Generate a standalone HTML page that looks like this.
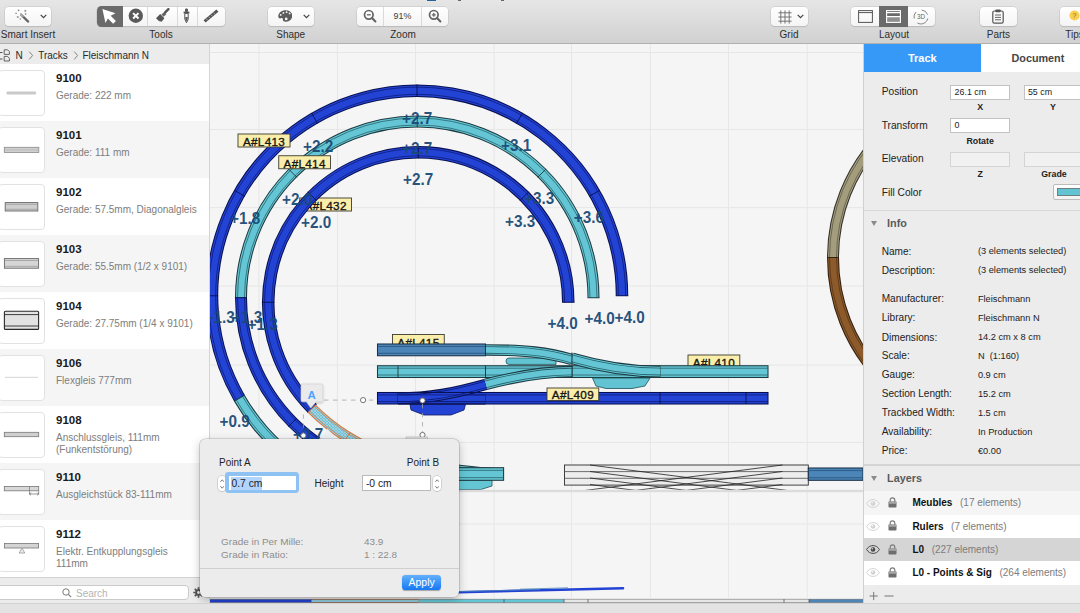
<!DOCTYPE html>
<html><head><meta charset="utf-8"><title>Layout</title>
<style>
*{box-sizing:border-box;margin:0;padding:0}
html,body{width:1080px;height:613px;overflow:hidden;background:#e2e2e2;font-family:"Liberation Sans",sans-serif;}
#app{position:relative;width:1080px;height:613px;overflow:hidden;background:#e2e2e2}
.abs{position:absolute}
#canvas{position:absolute;left:209px;top:44px;width:654px;height:559px;background:#f5f5f5;overflow:hidden}
#canvas svg{position:absolute;left:-209px;top:-44px}
.lb{font-family:"Liberation Sans",sans-serif;font-size:11.7px;fill:#151515;stroke:#151515;stroke-width:0.35;letter-spacing:0.32px}
.el{font-family:"Liberation Sans",sans-serif;font-size:16.4px;font-weight:bold;fill:#194a76;fill-opacity:0.94}
#tb{position:absolute;left:0;top:0;width:1080px;height:44px;background:linear-gradient(#e6e6e6,#d1d1d1);border-bottom:1px solid #b0b0b0}
.btn{position:absolute;top:6.8px;height:19.3px;background:linear-gradient(#ffffff,#f4f4f4);border-radius:4px;box-shadow:0 0 0 0.5px #c4c4c4,0 1px 1px rgba(0,0,0,0.18)}
.btn .dv{position:absolute;top:0;width:1px;height:100%;background:#dadada}
.btn .sel{position:absolute;top:-1px;height:21px;background:#6a6a6a}
.tl{position:absolute;top:27.6px;font-size:10px;color:#2e2e2e;white-space:nowrap;transform:translateX(-50%);line-height:13px}
.btn svg{position:absolute}
#side{position:absolute;left:0;top:44px;width:210.3px;height:559px;background:#fff;border-right:1.2px solid #d4d4d4;overflow:hidden}
#crumb{position:absolute;left:0;top:0;width:210px;height:20.6px;background:#ececec;border-bottom:1.2px solid #dadada;font-size:10px;color:#2a2a2a;line-height:23.5px}
.row{position:absolute;left:0;width:210px;height:57px}
.row{top:0}
.th{position:absolute;left:-2px;top:6px;width:46.5px;height:46px;background:#fff;border:1px solid #e2e2e2;border-radius:4px;overflow:hidden}
.th svg{position:absolute;left:1px;top:-7px}
.t{position:absolute;left:56px;top:6.6px;font-size:11.5px;font-weight:bold;color:#1a1a1a;line-height:14px}
.s1{position:absolute;left:56px;top:25.8px;font-size:10px;color:#7d7d7d;line-height:12px;white-space:nowrap}
.s2{position:absolute;left:56px;top:37.8px;font-size:10px;color:#7d7d7d;line-height:12px;white-space:nowrap}
#right{position:absolute;left:862.5px;top:44px;width:218.5px;height:559px;background:#ececec;border-left:1.5px solid #d0d0d0;overflow:hidden;font-size:10.25px;color:#222}
#right .l{position:absolute;left:18.2px;font-size:10.2px;color:#222;line-height:13px;white-space:nowrap}
#right .in{position:absolute;height:15px;background:#fff;border:1px solid #c2c2c2;font-size:8.9px;line-height:13px;padding-left:3.4px;color:#222;white-space:nowrap}
#right .in.dis{background:#f1f1f1;border-color:#d4d4d4}
#right .cap{position:absolute;font-size:8.8px;font-weight:bold;color:#222;transform:translateX(-50%);line-height:10px;white-space:nowrap}
.il{position:absolute;left:18.2px;font-size:10.1px;line-height:13px;color:#222;white-space:nowrap}
.iv{position:absolute;left:114.4px;font-size:9.25px;line-height:13px;color:#222;white-space:nowrap}
.hd{position:absolute;left:23.6px;font-size:10.8px;font-weight:bold;color:#5a5a5a;line-height:14px}
.tri{position:absolute;left:7px;width:0;height:0;border-left:3.6px solid transparent;border-right:3.6px solid transparent;border-top:5.6px solid #8a8a8a}
.ly{position:absolute;left:0;width:217px;height:23.4px;font-size:10px;line-height:23.4px;white-space:nowrap}
.ly .eye{position:absolute;left:2.4px;top:7.2px;width:14px;height:9px}
.ly .lock{position:absolute;left:24px;top:5.8px;width:9px;height:11px}
.ln{margin-left:48.9px;font-weight:bold;color:#111}
.lc{color:#7c7c7c;margin-left:7.6px}
#pop{position:absolute;left:199.5px;top:438.8px;width:259px;height:158.4px;background:#ececec;border-radius:5.5px;box-shadow:0 0 0 0.6px rgba(0,0,0,0.22),0 3px 10px rgba(0,0,0,0.25);font-size:10px;color:#222}
#pop .p{position:absolute;line-height:13px;white-space:nowrap}
#pop .g{color:#8c8c8c;font-size:9.95px}
.stp{position:absolute;width:7.6px;height:15px;background:#fff;border-radius:3.8px;box-shadow:0 0 0 0.5px #bdbdbd,0 0.5px 1px rgba(0,0,0,0.2)}
</style></head><body><div id="app">

<div id="canvas"><svg width="1080" height="613" viewBox="0 0 1080 613">
<defs><pattern id="hatch" width="3" height="3" patternUnits="userSpaceOnUse"><rect width="3" height="3" fill="#74c4d6"/><path d="M0 0L3 3M3 0L0 3" stroke="#a9d8ea" stroke-width="0.7"/></pattern><filter id="sh" x="-30%" y="-30%" width="160%" height="160%"><feDropShadow dx="0" dy="1" stdDeviation="1.2" flood-color="#000" flood-opacity="0.25"/></filter></defs>
<path d="M258.9 44V490" stroke="#e6e6e6" stroke-width="1"/>
<path d="M337.4 44V490" stroke="#e6e6e6" stroke-width="1"/>
<path d="M415.6 44V490" stroke="#e6e6e6" stroke-width="1"/>
<path d="M494.1 44V490" stroke="#e6e6e6" stroke-width="1"/>
<path d="M571.5 44V490" stroke="#e6e6e6" stroke-width="1"/>
<path d="M650.3 44V490" stroke="#e6e6e6" stroke-width="1"/>
<path d="M728.4 44V490" stroke="#e6e6e6" stroke-width="1"/>
<path d="M807.2 44V490" stroke="#e6e6e6" stroke-width="1"/>
<path d="M209 52.5H863" stroke="#e6e6e6" stroke-width="1"/>
<path d="M209 129.4H863" stroke="#e6e6e6" stroke-width="1"/>
<path d="M209 207.7H863" stroke="#e6e6e6" stroke-width="1"/>
<path d="M209 286.0H863" stroke="#e6e6e6" stroke-width="1"/>
<path d="M209 365.0H863" stroke="#e6e6e6" stroke-width="1"/>
<path d="M209 442.4H863" stroke="#e6e6e6" stroke-width="1"/>
<path d="M258.9 492V598" stroke="#e7e7e7" stroke-width="1"/>
<path d="M337.4 492V598" stroke="#e7e7e7" stroke-width="1"/>
<path d="M415.6 492V598" stroke="#e7e7e7" stroke-width="1"/>
<path d="M494.1 492V598" stroke="#e7e7e7" stroke-width="1"/>
<path d="M571.5 492V598" stroke="#e7e7e7" stroke-width="1"/>
<path d="M650.3 492V598" stroke="#e7e7e7" stroke-width="1"/>
<path d="M728.4 492V598" stroke="#e7e7e7" stroke-width="1"/>
<path d="M807.2 492V598" stroke="#e7e7e7" stroke-width="1"/>
<path d="M209 524H863" stroke="#e7e7e7" stroke-width="1"/>
<rect x="392.5" y="334.5" width="51.75" height="13.5" fill="#fbeeaa" stroke="#3c3a30" stroke-width="0.9"/><text x="418.375" y="346.9" text-anchor="middle" class="lb">A#L415</text>
<rect x="688" y="355" width="51.799999999999955" height="13" fill="#fbeeaa" stroke="#3c3a30" stroke-width="0.9"/><text x="713.9" y="366.9" text-anchor="middle" class="lb">A#L410</text>
<path d="M1007.00 83.50A174.00 174.00 0 0 0 833.00 257.50" fill="none" stroke="#34322a" stroke-width="12"/>
<path d="M1007.00 83.50A174.00 174.00 0 0 0 833.00 257.50" fill="none" stroke="#a39d7e" stroke-width="9.9"/>
<path d="M1007.00 86.98A170.52 170.52 0 0 0 836.48 257.50" fill="none" stroke="#5e5a46" stroke-width="0.8"/>
<path d="M1007.00 80.02A177.48 177.48 0 0 0 829.52 257.50" fill="none" stroke="#5e5a46" stroke-width="0.8"/>
<path d="M1007.00 89.50L1007.00 77.50" stroke="#34322a" stroke-width="0.9"/>
<path d="M839.00 257.50L827.00 257.50" stroke="#34322a" stroke-width="0.9"/>
<path d="M833.00 257.50A174.00 174.00 0 0 0 1007.00 431.50" fill="none" stroke="#33200e" stroke-width="12"/>
<path d="M833.00 257.50A174.00 174.00 0 0 0 1007.00 431.50" fill="none" stroke="#8c5a2b" stroke-width="9.9"/>
<path d="M836.48 257.50A170.52 170.52 0 0 0 1007.00 428.02" fill="none" stroke="#573616" stroke-width="0.8"/>
<path d="M829.52 257.50A177.48 177.48 0 0 0 1007.00 434.98" fill="none" stroke="#573616" stroke-width="0.8"/>
<path d="M839.00 257.50L827.00 257.50" stroke="#33200e" stroke-width="0.9"/>
<path d="M1007.00 425.50L1007.00 437.50" stroke="#33200e" stroke-width="0.9"/>
<path d="M622.00 295.75A205.00 205.00 0 1 0 239.46 398.25" fill="none" stroke="#081050" stroke-width="12.5"/>
<path d="M622.00 295.75A205.00 205.00 0 1 0 239.46 398.25" fill="none" stroke="#2343d4" stroke-width="10.4"/>
<path d="M618.38 295.75A201.38 201.38 0 1 0 242.60 396.44" fill="none" stroke="#0c1a78" stroke-width="0.8"/>
<path d="M625.62 295.75A208.62 208.62 0 1 0 236.33 400.06" fill="none" stroke="#0c1a78" stroke-width="0.8"/>
<path d="M589.12 196.38L599.95 190.12" stroke="#081050" stroke-width="0.9"/>
<path d="M516.38 123.63L522.62 112.80" stroke="#081050" stroke-width="0.9"/>
<path d="M417.00 97.00L417.00 84.50" stroke="#081050" stroke-width="0.9"/>
<path d="M317.63 123.63L311.38 112.80" stroke="#081050" stroke-width="0.9"/>
<path d="M244.88 196.38L234.05 190.12" stroke="#081050" stroke-width="0.9"/>
<path d="M218.25 295.75L205.75 295.75" stroke="#081050" stroke-width="0.9"/>
<path d="M615.75 295.75L628.25 295.75" stroke="#081050" stroke-width="0.9"/>
<path d="M244.88 395.12L234.05 401.38" stroke="#081050" stroke-width="0.9"/>
<path d="M239.46 398.25A205.00 205.00 0 0 0 417.00 500.75" fill="none" stroke="#1d3a40" stroke-width="12.5"/>
<path d="M239.46 398.25A205.00 205.00 0 0 0 417.00 500.75" fill="none" stroke="#64c6d4" stroke-width="10.4"/>
<path d="M242.60 396.44A201.38 201.38 0 0 0 417.00 497.12" fill="none" stroke="#28626c" stroke-width="0.8"/>
<path d="M236.33 400.06A208.62 208.62 0 0 0 417.00 504.38" fill="none" stroke="#28626c" stroke-width="0.8"/>
<path d="M317.62 467.87L311.37 478.70" stroke="#1d3a40" stroke-width="0.9"/>
<path d="M244.88 395.12L234.05 401.38" stroke="#1d3a40" stroke-width="0.9"/>
<path d="M417.00 494.50L417.00 507.00" stroke="#1d3a40" stroke-width="0.9"/>
<path d="M593.50 297.75A176.25 176.25 0 0 0 241.00 297.75" fill="none" stroke="#1d3a40" stroke-width="12"/>
<path d="M593.50 297.75A176.25 176.25 0 0 0 241.00 297.75" fill="none" stroke="#64c6d4" stroke-width="9.9"/>
<path d="M590.02 297.75A172.77 172.77 0 0 0 244.48 297.75" fill="none" stroke="#28626c" stroke-width="0.8"/>
<path d="M596.98 297.75A179.73 179.73 0 0 0 237.52 297.75" fill="none" stroke="#28626c" stroke-width="0.8"/>
<path d="M537.63 177.37L546.12 168.88" stroke="#1d3a40" stroke-width="0.9"/>
<path d="M417.25 127.50L417.25 115.50" stroke="#1d3a40" stroke-width="0.9"/>
<path d="M296.87 177.37L288.38 168.88" stroke="#1d3a40" stroke-width="0.9"/>
<path d="M587.50 297.75L599.50 297.75" stroke="#1d3a40" stroke-width="0.9"/>
<path d="M247.00 297.75L235.00 297.75" stroke="#1d3a40" stroke-width="0.9"/>
<path d="M241.00 297.75A176.25 176.25 0 0 0 417.25 474.00" fill="none" stroke="#081050" stroke-width="12"/>
<path d="M241.00 297.75A176.25 176.25 0 0 0 417.25 474.00" fill="none" stroke="#2343d4" stroke-width="9.9"/>
<path d="M244.48 297.75A172.77 172.77 0 0 0 417.25 470.52" fill="none" stroke="#0c1a78" stroke-width="0.8"/>
<path d="M237.52 297.75A179.73 179.73 0 0 0 417.25 477.48" fill="none" stroke="#0c1a78" stroke-width="0.8"/>
<path d="M296.87 418.13L288.38 426.62" stroke="#081050" stroke-width="0.9"/>
<path d="M247.00 297.75L235.00 297.75" stroke="#081050" stroke-width="0.9"/>
<path d="M417.25 468.00L417.25 480.00" stroke="#081050" stroke-width="0.9"/>
<rect x="299.75" y="198" width="51.75" height="13" fill="#fbeeaa" stroke="#3c3a30" stroke-width="0.9"/><text x="325.625" y="209.9" text-anchor="middle" class="lb">A#L432</text>
<path d="M568.25 302.25A150.00 150.00 0 1 0 312.18 408.32" fill="none" stroke="#081050" stroke-width="12.5"/>
<path d="M568.25 302.25A150.00 150.00 0 1 0 312.18 408.32" fill="none" stroke="#2343d4" stroke-width="10.4"/>
<path d="M564.62 302.25A146.38 146.38 0 1 0 314.75 405.75" fill="none" stroke="#0c1a78" stroke-width="0.8"/>
<path d="M571.88 302.25A153.62 153.62 0 1 0 309.62 410.88" fill="none" stroke="#0c1a78" stroke-width="0.8"/>
<path d="M519.90 200.60L528.74 191.76" stroke="#081050" stroke-width="0.9"/>
<path d="M418.25 158.50L418.25 146.00" stroke="#081050" stroke-width="0.9"/>
<path d="M316.60 200.60L307.76 191.76" stroke="#081050" stroke-width="0.9"/>
<path d="M274.50 302.25L262.00 302.25" stroke="#081050" stroke-width="0.9"/>
<path d="M562.00 302.25L574.50 302.25" stroke="#081050" stroke-width="0.9"/>
<path d="M316.60 403.90L307.76 412.74" stroke="#081050" stroke-width="0.9"/>
<path d="M311.78 408.72A200.00 200.00 0 0 0 347.22 436.91" fill="none" stroke="#d9793f" stroke-width="11.4"/>
<path d="M311.78 408.72A200.00 200.00 0 0 0 347.22 436.91" fill="none" stroke="url(#hatch)" stroke-width="9.3"/>
<path d="M314.12 406.38A196.69 196.69 0 0 0 348.97 434.11" fill="none" stroke="#d9793f" stroke-width="0.8"/>
<path d="M309.44 411.06A203.31 203.31 0 0 0 345.46 439.71" fill="none" stroke="#d9793f" stroke-width="0.8"/>
<path d="M315.81 404.69L307.75 412.75" stroke="#d9793f" stroke-width="0.9"/>
<path d="M350.24 432.08L344.20 441.74" stroke="#d9793f" stroke-width="0.9"/>
<path d="M347.22 436.91A200.00 200.00 0 0 0 391.40 457.51" fill="none" stroke="#d9793f" stroke-width="11.4"/>
<path d="M347.22 436.91A200.00 200.00 0 0 0 391.40 457.51" fill="none" stroke="url(#hatch)" stroke-width="9.3"/>
<path d="M348.97 434.11A196.69 196.69 0 0 0 392.42 454.37" fill="none" stroke="#d9793f" stroke-width="0.8"/>
<path d="M345.46 439.71A203.31 203.31 0 0 0 390.37 460.66" fill="none" stroke="#d9793f" stroke-width="0.8"/>
<path d="M350.24 432.08L344.20 441.74" stroke="#d9793f" stroke-width="0.9"/>
<path d="M393.16 452.09L389.64 462.93" stroke="#d9793f" stroke-width="0.9"/>
<path d="M440 480.3H492V486L480.5 489.6H440Z" fill="#64c6d4" stroke="#1c4c55" stroke-width="0.8"/>
<path d="M430 467 C 455 469.5 478 474 503.6 474" fill="none" stroke="#1d3a40" stroke-width="11.6"/>
<path d="M430 467 C 455 469.5 478 474 503.6 474" fill="none" stroke="#64c6d4" stroke-width="9.5"/>
<path d="M430 467 C 455 469.5 478 474 503.6 474" fill="none" stroke="#28626c" stroke-width="7.528"/>
<path d="M430 467 C 455 469.5 478 474 503.6 474" fill="none" stroke="#64c6d4" stroke-width="5.928"/>
<rect x="417" y="467.7" width="86.60000000000002" height="12.600000000000023" fill="#64c6d4" stroke="#1d3a40" stroke-width="1.05"/>
<path d="M417 470.35H503.6" stroke="#28626c" stroke-width="0.8"/>
<path d="M417 477.65H503.6" stroke="#28626c" stroke-width="0.8"/>
<rect x="564.5" y="465" width="243.8" height="20.1" fill="#ededed" stroke="#2e2e2e" stroke-width="0.9"/>
<path d="M564.5 471.6H808M564.5 478.3H808" stroke="#3a3a3a" stroke-width="0.7"/>
<path d="M590 465.0L786.9 490.4M782.4 465.0L585.5 490.4" stroke="#1e1e1e" stroke-width="0.8" fill="none"/>
<path d="M590 471.5L736.5 490.4M782.4 471.5L635.9 490.4" stroke="#1e1e1e" stroke-width="0.8" fill="none"/>
<path d="M590 478.0L686.1 490.4M782.4 478.0L686.3 490.4" stroke="#1e1e1e" stroke-width="0.8" fill="none"/>
<path d="M590 484.5L635.7 490.4M782.4 484.5L736.7 490.4" stroke="#1e1e1e" stroke-width="0.8" fill="none"/>
<rect x="808.3" y="468" width="54.700000000000045" height="12.300000000000011" fill="#4c86b9" stroke="#1a3048" stroke-width="1.05"/>
<path d="M808.3 470.58H863" stroke="#27507a" stroke-width="0.8"/>
<path d="M808.3 477.72H863" stroke="#27507a" stroke-width="0.8"/>
<rect x="377.5" y="344" width="108.0" height="11.75" fill="#4c86b9" stroke="#1a3048" stroke-width="1.05"/>
<path d="M377.5 346.47H485.5" stroke="#27507a" stroke-width="0.8"/>
<path d="M377.5 353.28H485.5" stroke="#27507a" stroke-width="0.8"/>
<rect x="377.5" y="365.75" width="390.5" height="11.75" fill="#64c6d4" stroke="#1d3a40" stroke-width="1.05"/>
<path d="M377.5 368.22H768" stroke="#28626c" stroke-width="0.8"/>
<path d="M377.5 375.03H768" stroke="#28626c" stroke-width="0.8"/>
<path d="M398 365.75V377.5" stroke="#1d3a40" stroke-width="0.9"/>
<path d="M485.5 365.75V377.5" stroke="#1d3a40" stroke-width="0.9"/>
<path d="M572 365.75V377.5" stroke="#1d3a40" stroke-width="0.9"/>
<path d="M660 365.75V377.5" stroke="#1d3a40" stroke-width="0.9"/>
<rect x="377.5" y="392.5" width="390.5" height="11.5" fill="#2343d4" stroke="#081050" stroke-width="1.05"/>
<path d="M377.5 394.92H768" stroke="#0c1a78" stroke-width="0.8"/>
<path d="M377.5 401.58H768" stroke="#0c1a78" stroke-width="0.8"/>
<path d="M398 392.5V404" stroke="#081050" stroke-width="0.9"/>
<path d="M485.5 392.5V404" stroke="#081050" stroke-width="0.9"/>
<path d="M660 392.5V404" stroke="#081050" stroke-width="0.9"/>
<path d="M746 392.5V404" stroke="#081050" stroke-width="0.9"/>
<path d="M509 358H556V364.4H509Q506 364.4 506 361.2Q506 358 509 358Z" fill="#62c4d2" stroke="#1e535c" stroke-width="0.8"/>
<path d="M592.5 378H650L645 386L632 388.5H606L596 386Z" fill="#62c4d2" stroke="#1e535c" stroke-width="0.8"/>
<path d="M410 404.5H465.5L464 410L451 415H424L411 410Z" fill="#2343d4" stroke="#0c1866" stroke-width="0.8"/>
<path d="M485.5 349.9 C 525 349.9 548 352.5 572 359.6" fill="none" stroke="#1d3a40" stroke-width="11.5"/>
<path d="M485.5 349.9 C 525 349.9 548 352.5 572 359.6" fill="none" stroke="#64c6d4" stroke-width="9.4"/>
<path d="M485.5 349.9 C 525 349.9 548 352.5 572 359.6" fill="none" stroke="#28626c" stroke-width="7.47"/>
<path d="M485.5 349.9 C 525 349.9 548 352.5 572 359.6" fill="none" stroke="#64c6d4" stroke-width="5.87"/>
<path d="M572 358.4 C 600 366.6 628 371.6 660 371.6" fill="none" stroke="#1d3a40" stroke-width="11.8"/>
<path d="M572 358.4 C 600 366.6 628 371.6 660 371.6" fill="none" stroke="#64c6d4" stroke-width="9.700000000000001"/>
<path d="M572 358.4 C 600 366.6 628 371.6 660 371.6" fill="none" stroke="#28626c" stroke-width="7.644"/>
<path d="M572 358.4 C 600 366.6 628 371.6 660 371.6" fill="none" stroke="#64c6d4" stroke-width="6.0440000000000005"/>
<path d="M485.5 384.4 C 515 376.6 545 371.6 572 371.6" fill="none" stroke="#1d3a40" stroke-width="11.5"/>
<path d="M485.5 384.4 C 515 376.6 545 371.6 572 371.6" fill="none" stroke="#64c6d4" stroke-width="9.4"/>
<path d="M485.5 384.4 C 515 376.6 545 371.6 572 371.6" fill="none" stroke="#28626c" stroke-width="7.47"/>
<path d="M485.5 384.4 C 515 376.6 545 371.6 572 371.6" fill="none" stroke="#64c6d4" stroke-width="5.87"/>
<path d="M398 398.2 C 430 398.2 455 393 485.5 384.5" fill="none" stroke="#081050" stroke-width="11.5"/>
<path d="M398 398.2 C 430 398.2 455 393 485.5 384.5" fill="none" stroke="#2343d4" stroke-width="9.4"/>
<path d="M398 398.2 C 430 398.2 455 393 485.5 384.5" fill="none" stroke="#0c1a78" stroke-width="7.47"/>
<path d="M398 398.2 C 430 398.2 455 393 485.5 384.5" fill="none" stroke="#2343d4" stroke-width="5.87"/>
<path d="M572 352.5V377.5M485.5 344V355.8M485.5 365.8V377.5M485.5 392.5V404" stroke="#1d3a40" stroke-width="1"/>
<path d="M398 392.5H485.5M398 404H485.5" stroke="#081050" stroke-width="1.05"/><path d="M398 394.9H485.5M398 401.6H485.5" stroke="#0c1a78" stroke-width="0.8"/>
<rect x="547" y="388" width="51.75" height="12.5" fill="#fbeeaa" stroke="#3c3a30" stroke-width="0.9"/><text x="572.875" y="399.4" text-anchor="middle" class="lb">A#L409</text>
<rect x="238" y="134" width="52" height="13" fill="#fbeeaa" stroke="#3c3a30" stroke-width="0.9"/><text x="264.0" y="145.9" text-anchor="middle" class="lb">A#L413</text>
<rect x="278.75" y="155.75" width="51.75" height="13.0" fill="#fbeeaa" stroke="#3c3a30" stroke-width="0.9"/><text x="304.625" y="167.65" text-anchor="middle" class="lb">A#L414</text>
<text transform="translate(402 123.5) scale(0.935 1)" class="el">+2.7</text>
<text transform="translate(402 154.25) scale(0.935 1)" class="el">+2.7</text>
<text transform="translate(403 184.75) scale(0.935 1)" class="el">+2.7</text>
<text transform="translate(501 150.5) scale(0.935 1)" class="el">+3.1</text>
<text transform="translate(524 204.25) scale(0.935 1)" class="el">+3.3</text>
<text transform="translate(505 226.5) scale(0.935 1)" class="el">+3.3</text>
<text transform="translate(573.75 223.0) scale(0.935 1)" class="el">+3.6</text>
<text transform="translate(547.5 329.25) scale(0.935 1)" class="el">+4.0</text>
<text transform="translate(584.5 324.25) scale(0.935 1)" class="el">+4.0</text>
<text transform="translate(614.5 322.5) scale(0.935 1)" class="el">+4.0</text>
<text transform="translate(303 151.5) scale(0.935 1)" class="el">+2.2</text>
<text transform="translate(282 205.0) scale(0.935 1)" class="el">+2.0</text>
<text transform="translate(301 227.5) scale(0.935 1)" class="el">+2.0</text>
<text transform="translate(230 223.5) scale(0.935 1)" class="el">+1.8</text>
<text transform="translate(204.5 322.5) scale(0.935 1)" class="el">+1.3</text>
<text transform="translate(232 322.5) scale(0.935 1)" class="el">+1.3</text>
<text transform="translate(247.5 329.5) scale(0.935 1)" class="el">+1.3</text>
<text transform="translate(219.5 426.5) scale(0.935 1)" class="el">+0.9</text>
<text transform="translate(293 439.5) scale(0.935 1)" class="el">+0.7</text>
<path d="M324 400.1H378M422.5 404V435M303.4 414.4V435" stroke="#a4a4a4" stroke-width="0.8" stroke-dasharray="4.4 4.6" fill="none"/>
<circle cx="363.1" cy="400.1" r="2.6" fill="#fff" stroke="#666" stroke-width="0.9"/>
<circle cx="422.5" cy="400.5" r="2.6" fill="#fff" stroke="#666" stroke-width="0.9"/>
<circle cx="422.5" cy="435" r="2.6" fill="#fff" stroke="#666" stroke-width="0.9"/>
<circle cx="303.4" cy="435.5" r="2.6" fill="#fff" stroke="#666" stroke-width="0.9"/>
<rect x="406" y="437" width="21.5" height="8" fill="#e4e4e4" stroke="#bbb" stroke-width="0.7"/>
<path d="M302.5 384H321.3Q322.8 384 322.8 385.5V400.3Q322.8 401.8 321.3 401.8H316L310.8 408L306.4 401.8H302.5Q301 401.8 301 400.3V385.5Q301 384 302.5 384Z" fill="#eaeaea" stroke="#cfcfcf" stroke-width="0.6" filter="url(#sh)"/>
<text x="311.6" y="399" text-anchor="middle" font-size="11.4" font-weight="bold" fill="#4da3ff" font-family="Liberation Sans">A</text>
<rect x="209" y="489.8" width="654" height="2.4" fill="#dcdcdc"/>
<path d="M330 595.5L459 592.2L540 590.3L623 588.2" stroke="#2343d4" stroke-width="2.6" fill="none" stroke-linecap="round"/>
<path d="M459 591.6L540 589.5M520 589.2L568 587.8" stroke="#4a85b8" stroke-width="0.8" fill="none"/>
<rect x="209" y="599.3" width="103" height="3.2" fill="#2343d4"/>
<rect x="311.5" y="599.3" width="107" height="3.2" fill="#8ecbe0" stroke="#d9793f" stroke-width="0.7"/>
<rect x="418.5" y="599.3" width="146" height="3.2" fill="#64c6d4"/>
<rect x="564" y="599.3" width="245" height="3.2" fill="#e6e6e6"/>
<rect x="809" y="599.3" width="54" height="3.2" fill="#4c86b9"/>
<path d="M209 599.3H863M209 602.5H863" stroke="#4a4a4a" stroke-width="0.6" stroke-opacity="0.75"/>
<path d="M504 599.3V602.5M564 599.3V602.5M588 599.3V602.5M784 599.3V602.5M809 599.3V602.5" stroke="#444" stroke-width="0.7"/>
</svg></div>

<div id="side">
<div id="crumb">
<svg class="abs" style="left:0;top:5px" width="11" height="13" viewBox="0 0 11 13"><path d="M0 3.5H2.5M0 10H2.5" stroke="#555" stroke-width="1"/><path d="M4.2 0.8H7.6L9.4 2.6V5.4H4.2Z M4.2 7.4H7.6L9.4 9.2V12H4.2Z" fill="none" stroke="#555" stroke-width="0.9"/></svg>
<span class="abs" style="left:15.5px">N</span>
<svg class="abs" style="left:28px;top:7.2px" width="6" height="9" viewBox="0 0 6 9"><path d="M1.2 0.6L4.6 4.5L1.2 8.4" fill="none" stroke="#777" stroke-width="0.9"/></svg>
<span class="abs" style="left:38.2px">Tracks</span>
<svg class="abs" style="left:72.5px;top:7.2px" width="6" height="9" viewBox="0 0 6 9"><path d="M1.2 0.6L4.6 4.5L1.2 8.4" fill="none" stroke="#777" stroke-width="0.9"/></svg>
<span class="abs" style="left:82.4px">Fleischmann N</span>
</div>
<div class="abs" style="left:0;top:-44px;width:209px;height:559px">
<div class="row" style="top:64px;background:#ffffff"><div class="th"><svg width="46" height="57" viewBox="0 0 46 57"><rect x="6.5" y="27.5" width="29.5" height="3" rx="1" fill="#c9c9c9"/></svg></div><div class="t">9100</div><div class="s1">Gerade: 222 mm</div></div>
<div class="row" style="top:121px;background:#f5f5f5"><div class="th"><svg width="46" height="57" viewBox="0 0 46 57"><rect x="4.3" y="26.3" width="34.5" height="5.2" fill="#d0d0d0" stroke="#8a8a8a" stroke-width="0.8"/><path d="M4.3 28.9H38.8" stroke="#aaa" stroke-width="0.6"/></svg></div><div class="t">9101</div><div class="s1">Gerade: 111 mm</div></div>
<div class="row" style="top:178px;background:#ffffff"><div class="th"><svg width="46" height="57" viewBox="0 0 46 57"><rect x="5.2" y="24.6" width="32.6" height="8.4" fill="#cfcfcf" stroke="#666" stroke-width="0.9"/><path d="M5.2 26.3H37.8M5.2 31.3H37.8" stroke="#8a8a8a" stroke-width="0.6"/></svg></div><div class="t">9102</div><div class="s1">Gerade: 57.5mm, Diagonalgleis</div></div>
<div class="row" style="top:235px;background:#f5f5f5"><div class="th"><svg width="46" height="57" viewBox="0 0 46 57"><rect x="4.4" y="23.6" width="34.2" height="9.6" fill="#d6d6d6" stroke="#666" stroke-width="0.9"/><path d="M4.4 25.5H38.6M4.4 31.3H38.6" stroke="#8a8a8a" stroke-width="0.6"/></svg></div><div class="t">9103</div><div class="s1">Gerade: 55.5mm (1/2 x 9101)</div></div>
<div class="row" style="top:292px;background:#ffffff"><div class="th"><svg width="46" height="57" viewBox="0 0 46 57"><rect x="4.4" y="19.2" width="34.2" height="18.2" rx="1" fill="#e2e2e2" stroke="#2a2a2a" stroke-width="1.1"/><path d="M4.4 22.6H38.6M4.4 34H38.6" stroke="#2a2a2a" stroke-width="0.9"/></svg></div><div class="t">9104</div><div class="s1">Gerade: 27.75mm (1/4 x 9101)</div></div>
<div class="row" style="top:349px;background:#f5f5f5"><div class="th"><svg width="46" height="57" viewBox="0 0 46 57"><path d="M5 28.3H38" stroke="#d4d4d4" stroke-width="1"/></svg></div><div class="t">9106</div><div class="s1">Flexgleis 777mm</div></div>
<div class="row" style="top:406px;background:#ffffff"><div class="th"><svg width="46" height="57" viewBox="0 0 46 57"><rect x="4.3" y="26.3" width="34.4" height="4.4" fill="#cfcfcf" stroke="#777" stroke-width="0.8"/></svg></div><div class="t">9108</div><div class="s1">Anschlussgleis, 111mm</div><div class="s2">(Funkentstörung)</div></div>
<div class="row" style="top:463px;background:#f5f5f5"><div class="th"><svg width="46" height="57" viewBox="0 0 46 57"><rect x="4.3" y="23.4" width="34.4" height="4.4" fill="#d8d8d8" stroke="#777" stroke-width="0.8"/><path d="M29.5 23.4V31.5M38.7 27.8V31.5" stroke="#777" stroke-width="0.7"/><path d="M29.5 31H38.7M31 29.6L29.6 31L31 32.4M37.2 29.6L38.6 31L37.2 32.4" stroke="#555" stroke-width="0.6" fill="none"/></svg></div><div class="t">9110</div><div class="s1">Ausgleichstück 83-111mm</div></div>
<div class="row" style="top:520px;background:#ffffff"><div class="th"><svg width="46" height="57" viewBox="0 0 46 57"><rect x="4.4" y="23.4" width="34.2" height="4.6" fill="#d4d4d4" stroke="#777" stroke-width="0.8"/><path d="M22 28.2L19.2 33H24.8Z" fill="#eee" stroke="#888" stroke-width="0.7"/></svg></div><div class="t">9112</div><div class="s1">Elektr. Entkupplungsgleis</div><div class="s2">111mm</div></div>
</div>
<div class="abs" style="left:0;top:533px;width:209px;height:26px;background:#ececec;border-top:1.6px solid #d2d2d2"></div>
<div class="abs" style="left:-6px;top:541px;width:195px;height:15px;background:#fff;border:1px solid #cacaca;border-radius:4px"></div>
<svg class="abs" style="left:62px;top:543.5px" width="10" height="10" viewBox="0 0 10 10"><circle cx="4" cy="4" r="3.2" fill="none" stroke="#7a7a7a" stroke-width="1"/><path d="M6.4 6.4L9.2 9.2" stroke="#7a7a7a" stroke-width="1.1"/></svg>
<span class="abs" style="left:76px;top:542.5px;font-size:10px;line-height:13px;color:#b4b4b4">Search</span>
<svg class="abs" style="left:192.5px;top:543px" width="11" height="11" viewBox="0 0 11 11"><g stroke="#555" stroke-width="1.7"><path d="M5.5 0.3V10.7M0.3 5.5H10.7M1.8 1.8L9.2 9.2M9.2 1.8L1.8 9.2"/></g><circle cx="5.5" cy="5.5" r="3.3" fill="#555"/><circle cx="5.5" cy="5.5" r="1.4" fill="#ececec"/></svg>
</div>

<div id="right">
<div class="abs" style="left:0;top:0;width:117.5px;height:28.2px;background:#3699f7"></div>
<div class="abs" style="left:117.5px;top:0;width:100px;height:28.2px;background:#fff"></div>
<div class="abs" style="left:0;top:7px;width:117.5px;text-align:center;font-size:11px;font-weight:bold;color:#fff;line-height:14px">Track</div>
<div class="abs" style="left:134.4px;top:7px;width:80px;text-align:center;font-size:10.8px;font-weight:bold;color:#454545;line-height:14px">Document</div>
<div class="l" style="top:41px">Position</div>
<div class="in" style="left:86.7px;top:40.8px;width:60.3px">26.1 cm</div>
<div class="in" style="left:160px;top:40.8px;width:60px">55 cm</div>
<div class="cap" style="left:116.6px;top:58px">X</div><div class="cap" style="left:189.5px;top:58px">Y</div>
<div class="l" style="top:74.5px">Transform</div>
<div class="in" style="left:86.7px;top:73.6px;width:60.3px;height:15.6px">0</div>
<div class="cap" style="left:116.6px;top:91.5px">Rotate</div>
<div class="l" style="top:108px">Elevation</div>
<div class="in dis" style="left:86.7px;top:108px;width:60.3px;height:14.6px"></div>
<div class="in dis" style="left:160px;top:108px;width:60px;height:14.6px"></div>
<div class="cap" style="left:116.6px;top:124.5px">Z</div><div class="cap" style="left:190.5px;top:124.5px">Grade</div>
<div class="l" style="top:141.5px">Fill Color</div>
<div class="abs" style="left:189.5px;top:140px;width:32px;height:16.4px;background:linear-gradient(#fff,#f2f2f2);border:1px solid #bcbcbc;border-radius:2px"></div>
<div class="abs" style="left:193.5px;top:144.4px;width:26px;height:8px;background:#62c4d2;border:0.8px solid #6d7f82"></div>
<div class="abs" style="left:0;top:166px;width:217px;height:1.2px;background:#d9d9d9"></div>
<div class="tri" style="top:177px"></div><div class="hd" style="top:172px">Info</div>
<div class="abs" style="left:0;top:-44px;width:217px;height:613px">
<div class="il" style="top:244.7px">Name:</div><div class="iv" style="top:245.0px">(3 elements selected)</div>
<div class="il" style="top:263.8px">Description:</div><div class="iv" style="top:264.1px">(3 elements selected)</div>
<div class="il" style="top:292.3px">Manufacturer:</div><div class="iv" style="top:292.6px">Fleischmann</div>
<div class="il" style="top:311.4px">Library:</div><div class="iv" style="top:311.7px">Fleischmann N</div>
<div class="il" style="top:330.5px">Dimensions:</div><div class="iv" style="top:330.8px">14.2 cm x 8 cm</div>
<div class="il" style="top:349.2px">Scale:</div><div class="iv" style="top:349.5px">N&nbsp; (1:160)</div>
<div class="il" style="top:368.2px">Gauge:</div><div class="iv" style="top:368.5px">0.9 cm</div>
<div class="il" style="top:387.2px">Section Length:</div><div class="iv" style="top:387.5px">15.2 cm</div>
<div class="il" style="top:406.2px">Trackbed Width:</div><div class="iv" style="top:406.5px">1.5 cm</div>
<div class="il" style="top:425.2px">Availability:</div><div class="iv" style="top:425.5px">In Production</div>
<div class="il" style="top:444.4px">Price:</div><div class="iv" style="top:444.7px">€0.00</div>
<div class="ly" style="top:491.4px;background:#f5f5f5"><svg class="eye" viewBox="0 0 14 9"><path d="M0.6 4.5C2.4 1.4 4.8 0.6 7 0.6C9.2 0.6 11.6 1.4 13.4 4.5C11.6 7.6 9.2 8.4 7 8.4C4.8 8.4 2.4 7.6 0.6 4.5Z" fill="none" stroke="#d2d2d2" stroke-width="1"/><circle cx="7" cy="4.5" r="2.3" fill="#d2d2d2"/><circle cx="6.3" cy="3.8" r="0.8" fill="#f5f5f5"/></svg><svg class="lock" viewBox="0 0 9 11"><path d="M2.2 5V3.2Q2.2 0.9 4.5 0.9Q6.8 0.9 6.8 3.2V5" fill="none" stroke="#7c7c7c" stroke-width="1.2"/><rect x="0.5" y="4.6" width="8" height="5.9" rx="0.8" fill="#6e6e6e"/><rect x="0.5" y="4.6" width="8" height="2.1" fill="#a8a8a8"/></svg><span class="ln">Meubles</span><span class="lc">(17 elements)</span></div>
<div class="ly" style="top:514.7px;background:#ffffff"><svg class="eye" viewBox="0 0 14 9"><path d="M0.6 4.5C2.4 1.4 4.8 0.6 7 0.6C9.2 0.6 11.6 1.4 13.4 4.5C11.6 7.6 9.2 8.4 7 8.4C4.8 8.4 2.4 7.6 0.6 4.5Z" fill="none" stroke="#d2d2d2" stroke-width="1"/><circle cx="7" cy="4.5" r="2.3" fill="#d2d2d2"/><circle cx="6.3" cy="3.8" r="0.8" fill="#ffffff"/></svg><svg class="lock" viewBox="0 0 9 11"><path d="M2.2 5V3.2Q2.2 0.9 4.5 0.9Q6.8 0.9 6.8 3.2V5" fill="none" stroke="#7c7c7c" stroke-width="1.2"/><rect x="0.5" y="4.6" width="8" height="5.9" rx="0.8" fill="#6e6e6e"/><rect x="0.5" y="4.6" width="8" height="2.1" fill="#a8a8a8"/></svg><span class="ln">Rulers</span><span class="lc">(7 elements)</span></div>
<div class="ly" style="top:538.0px;background:#d5d5d5"><svg class="eye" viewBox="0 0 14 9"><path d="M0.6 4.5C2.4 1.4 4.8 0.6 7 0.6C9.2 0.6 11.6 1.4 13.4 4.5C11.6 7.6 9.2 8.4 7 8.4C4.8 8.4 2.4 7.6 0.6 4.5Z" fill="none" stroke="#4a4a4a" stroke-width="1"/><circle cx="7" cy="4.5" r="2.3" fill="#4a4a4a"/><circle cx="6.3" cy="3.8" r="0.8" fill="#d5d5d5"/></svg><svg class="lock" viewBox="0 0 9 11"><path d="M2.2 5V3.2Q2.2 0.9 4.5 0.9Q6.8 0.9 6.8 3.2V5" fill="none" stroke="#7c7c7c" stroke-width="1.2"/><rect x="0.5" y="4.6" width="8" height="5.9" rx="0.8" fill="#6e6e6e"/><rect x="0.5" y="4.6" width="8" height="2.1" fill="#a8a8a8"/></svg><span class="ln">L0</span><span class="lc">(227 elements)</span></div>
<div class="ly" style="top:561.3px;background:#ffffff"><svg class="eye" viewBox="0 0 14 9"><path d="M0.6 4.5C2.4 1.4 4.8 0.6 7 0.6C9.2 0.6 11.6 1.4 13.4 4.5C11.6 7.6 9.2 8.4 7 8.4C4.8 8.4 2.4 7.6 0.6 4.5Z" fill="none" stroke="#d2d2d2" stroke-width="1"/><circle cx="7" cy="4.5" r="2.3" fill="#d2d2d2"/><circle cx="6.3" cy="3.8" r="0.8" fill="#ffffff"/></svg><svg class="lock" viewBox="0 0 9 11"><path d="M2.2 5V3.2Q2.2 0.9 4.5 0.9Q6.8 0.9 6.8 3.2V5" fill="none" stroke="#7c7c7c" stroke-width="1.2"/><rect x="0.5" y="4.6" width="8" height="5.9" rx="0.8" fill="#6e6e6e"/><rect x="0.5" y="4.6" width="8" height="2.1" fill="#a8a8a8"/></svg><span class="ln">L0 - Points &amp; Sig</span><span class="lc">(264 elements)</span></div>
</div>
<div class="abs" style="left:0;top:420.4px;width:217px;height:1.2px;background:#d4d4d4"></div>
<div class="tri" style="top:431.5px"></div><div class="hd" style="top:427px">Layers</div>
<svg class="abs" style="left:5px;top:547px" width="30" height="10" viewBox="0 0 30 10"><path d="M0.6 5H8.8M4.7 0.9V9.1M15.4 5H24.6" stroke="#6c6c6c" stroke-width="0.9"/></svg>
</div>

<svg class="abs" style="left:310px;top:424px" width="40" height="16" viewBox="310 424 40 16"><path d="M318.6 439.4L327.8 428.7L337.2 439.4Z" fill="rgba(234,240,245,0.88)"/></svg>
<div id="pop">
<div class="p" style="left:19.5px;top:17.3px">Point A</div>
<div class="p" style="right:19.4px;top:17.3px">Point B</div>
<div class="stp" style="left:18.5px;top:37.2px"><svg style="position:absolute;left:1.6px;top:2.6px" width="4.4" height="10" viewBox="0 0 4.4 10"><path d="M0.4 2.8L2.2 0.8L4 2.8M0.4 7.2L2.2 9.2L4 7.2" fill="none" stroke="#555" stroke-width="0.8"/></svg></div>
<div class="abs" style="left:25.8px;top:33.6px;width:73.6px;height:20.4px;border-radius:3.4px;background:#8ec2f3"></div>
<div class="abs" style="left:29px;top:37px;width:67.1px;height:14px;background:#fff"></div>
<div class="abs" style="left:31.5px;top:38.4px;width:30.7px;height:12.4px;background:#b2d5fd"></div>
<div class="p" style="left:32px;top:38.4px;font-size:10.3px">0.7 cm</div>
<div class="p" style="left:115px;top:38.2px">Height</div>
<div class="abs" style="left:162.8px;top:36.4px;width:68.8px;height:15.8px;background:#fff;border:1px solid #b9b9b9"></div>
<div class="p" style="left:166.4px;top:38.2px;font-size:10.3px">-0 cm</div>
<div class="stp" style="left:233.6px;top:37.2px"><svg style="position:absolute;left:1.6px;top:2.6px" width="4.4" height="10" viewBox="0 0 4.4 10"><path d="M0.4 2.8L2.2 0.8L4 2.8M0.4 7.2L2.2 9.2L4 7.2" fill="none" stroke="#555" stroke-width="0.8"/></svg></div>
<div class="p g" style="left:21.6px;top:96.2px">Grade in Per Mille:</div><div class="p g" style="left:164.4px;top:96.2px">43.9</div>
<div class="p g" style="left:21.6px;top:108.8px">Grade in Ratio:</div><div class="p g" style="left:164.4px;top:108.8px">1 : 22.8</div>
<div class="abs" style="left:0;top:129px;width:259px;height:1px;background:#cfcfcf"></div>
<div class="abs" style="left:202.2px;top:136.5px;width:39.8px;height:15px;border-radius:3.6px;background:linear-gradient(#62b0fc,#1678f3);box-shadow:0 0.5px 1px rgba(0,0,0,0.3);color:#fff;font-size:10.5px;line-height:15px;text-align:center">Apply</div>
</div>

<div id="tb">
<div class="abs" style="left:426.8px;top:0;width:9.5px;height:1.2px;background:#2c5f9a"></div>
<div class="abs" style="left:457.5px;top:0;width:3px;height:0.8px;background:#666"></div><div class="abs" style="left:500.5px;top:0;width:3px;height:0.8px;background:#666"></div>

<div class="btn" style="left:5px;width:46px">
<svg style="left:10px;top:2.5px" width="20" height="16" viewBox="0 0 20 16"><path d="M6 5.6L13.2 12.6" stroke="#666" stroke-width="2.2" stroke-linecap="round"/><path d="M6 5.6L7.6 7.2" stroke="#a8a8a8" stroke-width="2.2" stroke-linecap="round"/><g stroke="#7a7a7a" stroke-width="0.7" fill="none"><path d="M3.6 0.5V2.3M2.7 1.4H4.5M10.3 0.8V3M9.2 1.9H11.4M1.1 3.7V5.1M0.4 4.4H1.8M10.6 4.2V5.8M9.8 5H11.4M2.8 7V9M1.8 8H3.8M5.3 9.4V10.6M4.7 10H5.9"/></g></svg>
<svg style="left:35.4px;top:7.6px" width="7" height="5" viewBox="0 0 7 5"><path d="M0.7 0.8L3.5 3.6L6.3 0.8" fill="none" stroke="#444" stroke-width="1.2"/></svg>
</div>
<div class="tl" style="left:28px">Smart Insert</div>

<div class="btn" style="left:97.3px;width:127.8px">
<div class="sel" style="left:-0.5px;width:26.3px;border-radius:4.5px 0 0 4.5px"></div>
<div class="dv" style="left:50px"></div><div class="dv" style="left:79.4px"></div><div class="dv" style="left:100px"></div>
<svg style="left:4.2px;top:1.2px" width="17.5" height="17.5" viewBox="0 0 15 15"><path d="M1.2 0.8L12.4 4.4L8.3 6.6L12.8 11.1L10.4 13.5L5.9 9L3.8 12.8Z" fill="#fff"/></svg>
<svg style="left:30.4px;top:1.2px" width="15.6" height="15.6" viewBox="0 0 15 15"><circle cx="7.5" cy="7.5" r="6.9" fill="#5a5a5a"/><path d="M4.9 4.9L10.1 10.1M10.1 4.9L4.9 10.1" stroke="#fff" stroke-width="1.9"/></svg>
<svg style="left:57.5px;top:1.6px" width="16" height="15" viewBox="0 0 16 15"><path d="M1 10.2L5.2 6L9.4 10.2L6.6 13.8Q3 13 1 10.2Z" fill="#555"/><path d="M6.4 6.6L8.6 8.8L11.4 6.2L9.2 4Z" fill="#666"/><path d="M10.2 4.4L13.4 1.2" stroke="#555" stroke-width="2.4" stroke-linecap="round"/></svg>
<svg style="left:84.4px;top:1.6px" width="9" height="16" viewBox="0 0 9 16"><rect x="3" y="0.6" width="3" height="3.4" rx="1.2" fill="#555"/><rect x="1.6" y="3.6" width="5.8" height="1.8" fill="#555"/><path d="M2.8 5.4H6.2V11.2L4.5 14.8L2.8 11.2Z" fill="none" stroke="#555" stroke-width="1"/><path d="M3.4 9H5.6V11L4.5 13.4L3.4 11Z" fill="#555"/></svg>
<svg style="left:105.5px;top:2.4px" width="16" height="14" viewBox="0 0 16 14"><path d="M1.6 12.4L14.4 1.6" stroke="#555" stroke-width="3.2"/><path d="M3.2 9.6L4.6 11.2M5.6 7.6L7 9.2M8 5.6L9.4 7.2M10.4 3.6L11.8 5.2" stroke="#ddd" stroke-width="0.6"/></svg>
</div>
<div class="tl" style="left:161px">Tools</div>

<div class="btn" style="left:267.5px;width:46.5px">
<svg style="left:10.2px;top:3px" width="14.6" height="12" viewBox="0 0 14.6 12"><path d="M7.8 0.3C3.6 0.2 0.3 3 0.3 6.3C0.3 8 1.4 8.9 2.7 8.3C3.8 7.8 4.8 8.3 4.8 9.5C4.8 11 6.2 11.8 7.8 11.7C11.6 11.5 14.3 8.8 14.3 5.6C14.3 2.5 11.6 0.4 7.8 0.3Z" fill="#5c5c5c"/><g fill="#f7f7f7"><circle cx="2.7" cy="4.9" r="0.9"/><circle cx="5.4" cy="2.9" r="0.9"/><circle cx="8.6" cy="2.2" r="0.9"/><circle cx="11.6" cy="3.4" r="0.9"/><circle cx="8.2" cy="8.9" r="1.35"/></g></svg>
<svg style="left:35.6px;top:7.6px" width="7" height="5" viewBox="0 0 7 5"><path d="M0.7 0.8L3.5 3.6L6.3 0.8" fill="none" stroke="#444" stroke-width="1.2"/></svg>
</div>
<div class="tl" style="left:290.7px">Shape</div>

<div class="btn" style="left:357px;width:91px">
<div class="dv" style="left:26px"></div><div class="dv" style="left:63.8px"></div>
<svg style="left:6.2px;top:2.5px" width="15" height="15" viewBox="0 0 15 15"><circle cx="5.8" cy="5.8" r="4.3" fill="none" stroke="#636363" stroke-width="1.7"/><path d="M9 9L12.4 12.4" stroke="#636363" stroke-width="2.1" stroke-linecap="round"/><path d="M3.9 5.8H7.7" stroke="#636363" stroke-width="1.3"/></svg>
<div class="abs" style="left:26px;top:3px;width:39px;text-align:center;font-size:8.9px;line-height:13px;color:#3a3a3a">91%</div>
<svg style="left:71px;top:2.5px" width="15" height="15" viewBox="0 0 15 15"><circle cx="5.8" cy="5.8" r="4.3" fill="none" stroke="#636363" stroke-width="1.7"/><path d="M9 9L12.4 12.4" stroke="#636363" stroke-width="2.1" stroke-linecap="round"/><path d="M3.9 5.8H7.7M5.8 3.9V7.7" stroke="#636363" stroke-width="1.3"/></svg>
</div>
<div class="tl" style="left:403px">Zoom</div>

<div class="btn" style="left:770.5px;width:37.2px">
<svg style="left:7.6px;top:3px" width="14" height="14" viewBox="0 0 14 14"><path d="M2.8 0.4V13.6M7 0.4V13.6M11.2 0.4V13.6M0.4 2.8H13.6M0.4 7H13.6M0.4 11.2H13.6" stroke="#6a6a6a" stroke-width="0.9" fill="none"/></svg>
<svg style="left:26.6px;top:7.6px" width="7" height="5" viewBox="0 0 7 5"><path d="M0.7 0.8L3.5 3.6L6.3 0.8" fill="none" stroke="#444" stroke-width="1.2"/></svg>
</div>
<div class="tl" style="left:789px">Grid</div>

<div class="btn" style="left:851px;width:84px">
<div class="sel" style="left:27.5px;width:29px"></div>
<svg style="left:6.6px;top:3.4px" width="15" height="13" viewBox="0 0 15 13"><rect x="0.6" y="0.6" width="13.8" height="11.8" fill="none" stroke="#555" stroke-width="1"/><path d="M0.6 2.6H14.4" stroke="#555" stroke-width="1"/></svg>
<svg style="left:34.6px;top:3.4px" width="15" height="13" viewBox="0 0 15 13"><rect x="0.6" y="0.6" width="13.8" height="11.8" fill="none" stroke="#fff" stroke-width="1.1"/><path d="M0.6 2.6H14.4M0.6 6.6H14.4" stroke="#fff" stroke-width="1.1"/><rect x="1" y="7" width="13" height="5" fill="#fff" opacity="0.25"/></svg>
<svg style="left:62px;top:2.4px" width="16" height="16" viewBox="0 0 16 16"><path d="M1.2 9.6A7 7 0 0 1 3 3M8.6 1A7 7 0 0 1 14.6 5.6M14.8 9.4A7 7 0 0 1 4.4 14" fill="none" stroke="#777" stroke-width="0.9"/><text x="8" y="10.3" font-size="6.4" text-anchor="middle" fill="#666" font-family="Liberation Sans">3D</text></svg>
</div>
<div class="tl" style="left:894px">Layout</div>

<div class="btn" style="left:980px;width:37px">
<svg style="left:12.4px;top:2.4px" width="12" height="15" viewBox="0 0 12 15"><rect x="0.8" y="2" width="10.4" height="12.2" rx="1.6" fill="none" stroke="#555" stroke-width="1.2"/><rect x="3.4" y="0.6" width="5.2" height="2.6" rx="0.6" fill="#555"/><path d="M3 6H9M3 8.4H9M3 10.8H9" stroke="#555" stroke-width="0.9"/></svg>
</div>
<div class="tl" style="left:998.4px">Parts</div>

<div class="btn" style="left:1060px;width:30px">
<svg style="left:8.9px;top:3.3px" width="11" height="11" viewBox="0 0 11 11"><circle cx="5.5" cy="5.5" r="5.1" fill="#f8cf50"/><text x="5.5" y="8" font-size="7" text-anchor="middle" fill="#8a6a10" font-family="Liberation Sans">?</text></svg>
</div>
<div class="tl" style="left:1074.6px">Tips</div>
</div>

<div class="abs" style="left:0;top:603px;width:1080px;height:10px;background:#e3e3e3;border-top:1px solid #d2d2d2"></div>
</div></body></html>
